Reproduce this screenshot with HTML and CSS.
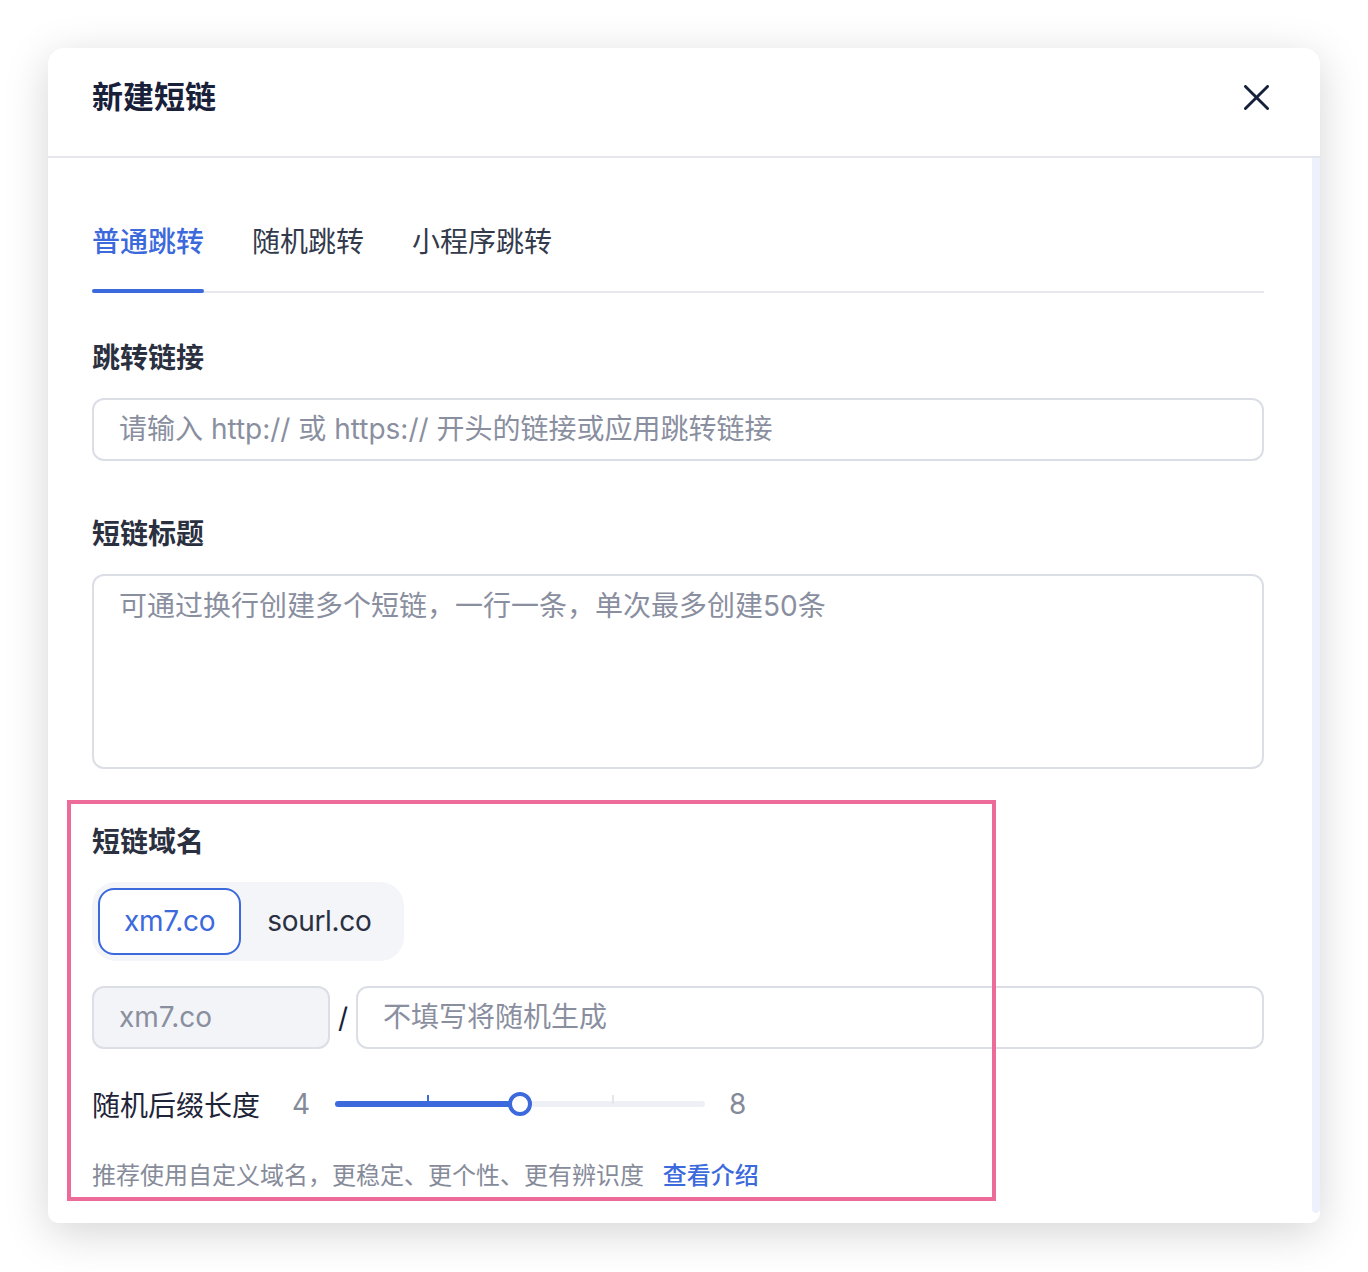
FILE: index.html
```html
<!DOCTYPE html>
<html lang="zh-CN">
  <head>
    <meta charset="UTF-8" />
    <meta name="viewport" content="width=device-width, initial-scale=1.0" />
    <title>新建短链</title>
    <link rel="stylesheet" href="styles.css">
  </head>
  <body>
    <div class="dialog">
      <div class="dialog-header">
        <h1>新建短链</h1>
        <button class="close-btn" aria-label="关闭">
          <svg width="26" height="26" viewBox="0 0 26 26">
            <path d="M1.5 1.5 L24.5 24.5 M24.5 1.5 L1.5 24.5" stroke="#16203a" stroke-width="3" stroke-linecap="round" fill="none" />
          </svg>
        </button>
      </div>

      <div class="dialog-body">
        <div class="content">
          <div class="tabs">
            <div class="tab active">普通跳转</div>
            <div class="tab">随机跳转</div>
            <div class="tab">小程序跳转</div>
          </div>

          <div class="field-label">跳转链接</div>
          <div class="input">请输入 http:// 或 https:// 开头的链接或应用跳转链接</div>

          <div class="field-label">短链标题</div>
          <div class="input textarea">可通过换行创建多个短链，一行一条，单次最多创建50条</div>

          <div class="field-label">短链域名</div>
          <div class="segmented">
            <div class="seg-item selected">xm7.co</div>
            <div class="seg-item">sourl.co</div>
          </div>

          <div class="path-row">
            <div class="input domain">xm7.co</div>
            <span class="slash">/</span>
            <div class="input path">不填写将随机生成</div>
          </div>

          <div class="slider-row">
            <span class="slider-label">随机后缀长度</span>
            <span class="slider-value">4</span>
            <div class="slider">
              <div class="slider-fill" style="width: 50%"></div>
              <span class="tick on" style="left: 25%"></span>
              <span class="tick" style="left: 75%"></span>
              <span class="thumb" style="left: 50%"></span>
            </div>
            <span class="slider-value">8</span>
          </div>

          <div class="hint">
            推荐使用自定义域名，更稳定、更个性、更有辨识度
            <a href="#" class="hint-link">查看介绍</a>
          </div>
        </div>
        <div class="scroll-track"></div>
      </div>

      <div class="highlight"></div>
    </div>
  </body>
</html>
```

FILE: styles.css
```css
* {
  margin: 0;
  padding: 0;
  box-sizing: border-box;
}

body {
  font-family: "Inter", "Noto Sans CJK SC", sans-serif;
  background: #fff;
  padding: 48px;
  color: #2b3040;
}

.dialog {
  position: relative;
  width: 1272px;
  height: 1175px;
  background: #fff;
  border-radius: 16px 16px 10px 10px;
  box-shadow: 0 10px 44px rgba(0, 0, 0, 0.17);
  display: flex;
  flex-direction: column;
}

.dialog-header {
  height: 110px;
  border-bottom: 2px solid #e6e7ec;
  display: flex;
  align-items: center;
  justify-content: space-between;
  padding: 0 51px 10px 44px;
}

.dialog-header h1 {
  font-size: 31px;
  font-weight: 700;
  color: #18203a;
  line-height: 44px;
}

.close-btn {
  border: none;
  background: none;
  width: 25px;
  height: 25px;
  display: flex;
  cursor: pointer;
}

.close-btn svg {
  width: 25px;
  height: 25px;
}

.dialog-body {
  flex: 1;
  display: flex;
}

.content {
  flex: 1;
  padding: 0 48px 30px 44px;
}

.scroll-track {
  width: 8px;
  margin-bottom: 10px;
  background: #edf1fc;
  border-radius: 0 0 4px 4px;
}

/* tabs */
.tabs {
  display: flex;
  gap: 48px;
  padding-top: 64px;
  border-bottom: 2px solid #e8e9ee;
}

.tab {
  position: relative;
  font-size: 28px;
  line-height: 40px;
  padding-bottom: 29px;
  color: #333a4b;
}

.tab.active {
  color: #3c69dc;
  font-weight: 500;
}

.tab.active::after {
  content: "";
  position: absolute;
  left: 0;
  right: 0;
  bottom: -2px;
  height: 4px;
  border-radius: 2px;
  background: #3c69dc;
}

/* fields */
.field-label {
  font-size: 28px;
  line-height: 40px;
  font-weight: 600;
  color: #2b3040;
  margin-top: 53px;
  margin-bottom: 20px;
}

.tabs + .field-label {
  margin-top: 45px;
}

.input {
  height: 63px;
  border: 2px solid #dcdee5;
  border-radius: 12px;
  padding: 0 25px;
  font-size: 28px;
  line-height: 59px;
  color: #8a8f9f;
  white-space: nowrap;
  overflow: hidden;
}

.input.textarea {
  height: 195px;
  padding-top: 10px;
  line-height: 40px;
}

/* domain switch */
.segmented {
  display: inline-flex;
  padding: 6px;
  background: #f3f5f9;
  border-radius: 24px;
}

.seg-item {
  height: 67px;
  padding: 0 24px;
  border: 2px solid transparent;
  border-radius: 16px;
  font-size: 28px;
  line-height: 63px;
  color: #2b3040;
  letter-spacing: -0.3px;
}

.seg-item.selected {
  background: #fff;
  border-color: #3c69dc;
  color: #3c69dc;
}

.path-row {
  display: flex;
  align-items: center;
  margin-top: 25px;
}

.input.domain {
  width: 238px;
  background: #f3f4f8;
}

.slash {
  padding: 0 8px 0 8px;
  font-size: 28px;
  color: #18203a;
}

.input.path {
  flex: 1;
}

/* slider */
.slider-row {
  display: flex;
  align-items: center;
  height: 40px;
  margin-top: 35px;
}

.slider-label {
  font-size: 28px;
  color: #1f2538;
}

.slider-value {
  font-size: 28px;
  color: #858a99;
  margin-left: 32px;
}

.slider {
  position: relative;
  width: 370px;
  height: 6px;
  margin: 0 24px 0 25px;
  border-radius: 3px;
  background: #eef0f5;
}

.slider-fill {
  height: 100%;
  border-radius: 3px;
  background: #3c69dc;
}

.tick {
  position: absolute;
  bottom: 3px;
  width: 2px;
  height: 9px;
  margin-left: -1px;
  background: #e4e6ec;
}

.tick.on {
  background: #3c69dc;
}

.thumb {
  position: absolute;
  top: 50%;
  width: 24px;
  height: 24px;
  margin: -12px 0 0 -12px;
  border: 4px solid #3c69dc;
  border-radius: 50%;
  background: #fff;
}

.slider + .slider-value {
  margin-left: 0;
}

/* hint */
.hint {
  margin-top: 35px;
  font-size: 24px;
  line-height: 34px;
  color: #868b9a;
}

.hint-link {
  margin-left: 12px;
  color: #3c69dc;
  font-weight: 500;
  text-decoration: none;
}

/* annotation box */
.highlight {
  position: absolute;
  left: 19px;
  top: 752px;
  width: 929px;
  height: 401px;
  border: 4px solid #ec6b98;
  pointer-events: none;
}
```
